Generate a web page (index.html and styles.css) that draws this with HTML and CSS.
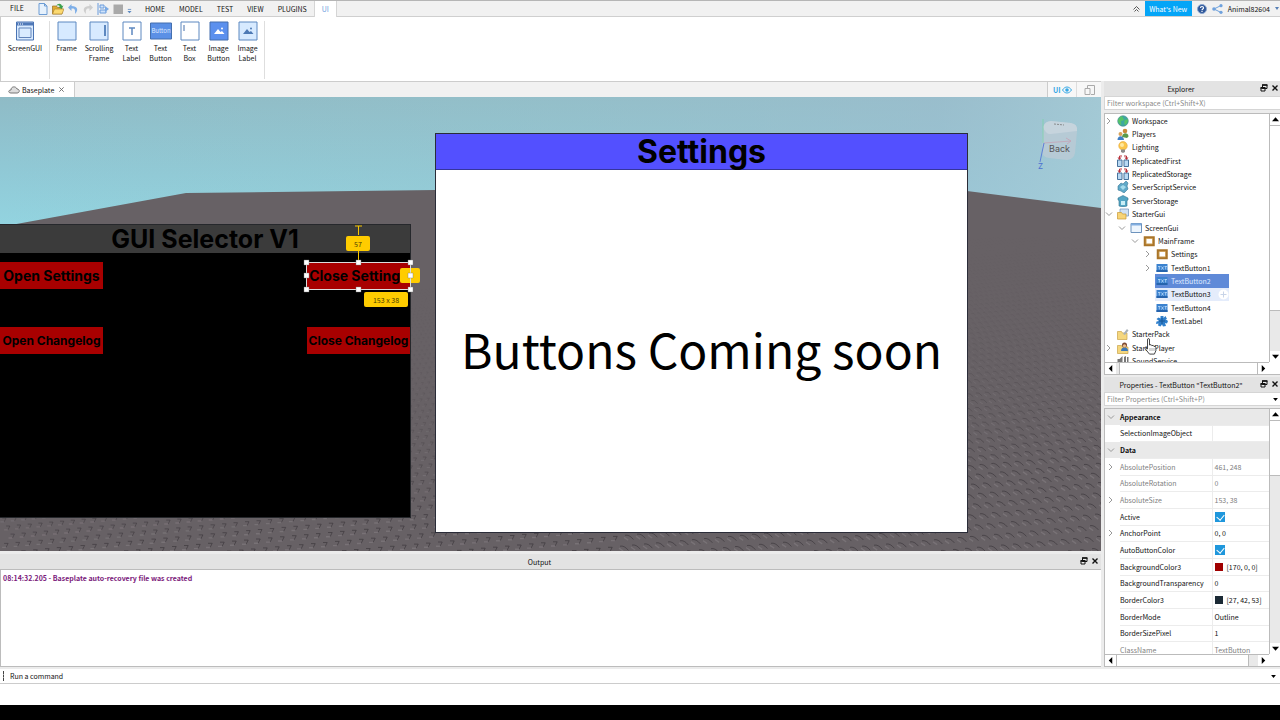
FILE: index.html
```html
<!DOCTYPE html>
<html lang="en">
<head>
<meta charset="utf-8">
<title>Baseplate - Studio</title>
<link rel="stylesheet" href="styles.css">
</head>
<body>
<svg class="defs" aria-hidden="true">
  <symbol id="float" viewBox="0 0 8 8"><path d="M2.500 1h4.500v3.500h-4.500zM1 3.500h4v3.500h-4z" fill="#eee" stroke="#111"/><path d="M2 1h5.500M.500 4h5" stroke="#111" stroke-width="1.500"/></symbol>
  <symbol id="close" viewBox="0 0 8 8"><path d="M1.500 1.500l5 5m0-5l-5 5" stroke="#111" stroke-width="1.400"/></symbol>
  <symbol id="right" viewBox="0 0 8 8"><path d="M2 1l3 3-3 3" fill="none" stroke="#999"/></symbol>
  <symbol id="down" viewBox="0 0 8 8"><path d="M1 2.500l3 3 3-3" fill="none" stroke="#999"/></symbol>
  <symbol id="i-world" viewBox="0 0 12 12"><circle cx="6" cy="6" r="5.300" fill="#3fa7a0" stroke="#4a8a8c" stroke-width=".6"/><path d="M3 2c2-1 3 0 3 1s2 1 1 2-3 0-3 2 1 2 0 3c-2-1-3-3-3-5zM8 5l3-1c0 3-1 5-3 6-1-2-1-3 0-5z" fill="#55c367"/></symbol>
  <symbol id="i-players" viewBox="0 0 12 12"><circle cx="8" cy="3" r="2.300" fill="#c98a3a"/><path d="M5 9c0-5 6.500-5 6.500-.5L10 10z" fill="#5a9a4a"/><circle cx="3.500" cy="6" r="2" fill="#d8a25a"/><path d="M.5 12c0-5 6-5 6.500 0z" fill="#3f7ec4"/></symbol>
  <symbol id="i-light" viewBox="0 0 12 12"><circle cx="6" cy="4.800" r="4.300" fill="#fbc64b" stroke="#e0a030" stroke-width=".5"/><circle cx="5" cy="4" r="2" fill="#ffe9a0"/><path d="M4 8.500h4V11L6 12l-2-1z" fill="#8b8b8b"/></symbol>
  <symbol id="i-repl" viewBox="0 0 12 12"><path d="M.500 5h4.500v6.500H.500zM7 5h4.500v6.500H7z" fill="#b9d9f3" stroke="#47729c"/><path d="M2.500 4V1h2.500M9.500 4V1H7" fill="none" stroke="#b8323c"/><path d="M.500 2.500h4l-2 2.500zM7.500 2.500h4L9.500 5z" fill="#b8323c"/></symbol>
  <symbol id="i-sss" viewBox="0 0 12 12"><path d="M1 5l3-3 2 1 3-3 2 2-1 3 1 3-4 4-3-2-3-1z" fill="#5fa9c8" stroke="#3a7898" stroke-width=".6"/><path d="M3 6l3-2 3 2-3 3z" fill="#a5dbec"/></symbol>
  <symbol id="i-ss" viewBox="0 0 12 12"><path d="M1 3l5-2.500L11 3v2l-1 .5V11l-4 1-4-1V5.500L1 5z" fill="#53a5c4" stroke="#33728e" stroke-width=".6"/><path d="M4 6h4v4H4z" fill="#c8eef6"/></symbol>
  <symbol id="i-sgui" viewBox="0 0 12 12"><path d="M3 1h8.500v7H3z" fill="#cfe1f4" stroke="#6b8fb8" stroke-width=".7"/><path d="M.5 4.500h4l1 1.500H9v5H.5z" fill="#f7d477" stroke="#c79a35" stroke-width=".7"/></symbol>
  <symbol id="i-screen" viewBox="0 0 12 12"><path d="M1 1.500h10.500v9H1z" fill="#edf5fd" stroke="#6d93bd"/><path d="M1 2.500h10" stroke="#82aee0" stroke-width="2"/></symbol>
  <symbol id="i-frame" viewBox="0 0 12 12"><path d="M2 2.500h8.500v7.500H2z" fill="#fff" stroke="#a9742a" stroke-width="2.500"/><path d="M3 3.500h6.500v5.500H3z" fill="none" stroke="#d9ab5d" stroke-width=".6"/></symbol>
  <symbol id="i-btn" viewBox="0 0 12 12"><path d="M.5 2h11v8H.5z" fill="#3b82cf"/><path d="M.5 8h11v2H.5z" fill="#2664ad"/><path d="M2 4.500h2.500M3.300 4.500v3M5.500 4.500l2 3m0-3l-2 3M8.500 4.500H11M9.700 4.500v3" stroke="#bcdcfa" stroke-width=".8"/></symbol>
  <symbol id="i-label" viewBox="0 0 12 12"><path d="M4.500 1h3v2l2-2 1.500 3h-1.500l2.500 2-1 2.500-2-.5 1 3-3 .500-1-2-1.500 2-2.500-1 .500-2-2.500.500L.500 6.500 3 6 .500 4l2-1.500 2 1z" fill="#2f7fcb"/><path d="M3 6h6M6 3v6" stroke="#185796"/></symbol>
  <symbol id="i-pack" viewBox="0 0 12 12"><path d="M.5 3.500h4l1 1.500H10v6.500H.5z" fill="#f5d77e" stroke="#c9a347" stroke-width=".7"/><path d="M6 6l4-5 1.500 1.500L8 7z" fill="#a9b1b8"/></symbol>
  <symbol id="i-splayer" viewBox="0 0 12 12"><path d="M.5 3.500h4l1 1.500H11v6.500H.5z" fill="#f5d77e" stroke="#c9a347" stroke-width=".7"/><path d="M4 9c0-5 7-5 7 0z" fill="#3c78b8"/><circle cx="7.500" cy="3" r="2.500" fill="#7d4b32"/><circle cx="7.500" cy="3.800" r="1.600" fill="#edbd8c"/></symbol>
  <symbol id="i-sound" viewBox="0 0 12 12"><path d="M.5 4h2l3-3v10l-3-3h-2zM7 2l2-1v10l-2-1zM10 2h1.500v8H10z" fill="#777"/></symbol>
  <symbol id="tri-up" viewBox="0 0 8 8"><path d="M0 6h8L4 1.500z"/></symbol>
  <symbol id="tri-down" viewBox="0 0 8 8"><path d="M0 2h8L4 6.500z"/></symbol>
  <symbol id="tri-left" viewBox="0 0 8 8"><path d="M6 0v8L2 4z"/></symbol>
  <symbol id="tri-right" viewBox="0 0 8 8"><path d="M2 0v8l4-4z"/></symbol>
</svg>

<header class="menubar">
  <button class="menu file">FILE</button>
  <div class="quick">
    <button aria-label="New"><svg viewBox="0 0 12 12"><path d="M2 .5h5.500L10 3v8.500H2z" fill="#e6f1fc" stroke="#6c9cd4"/><path d="M7.500.5V3H10" fill="none" stroke="#6c9cd4"/></svg></button>
    <button aria-label="Open"><svg viewBox="0 0 12 12"><path d="M.5 3h4l1 1.500H10V11H.5z" fill="#e1ab31" stroke="#987022" stroke-width=".7"/><path d="M2.500 6H12l-2 5H.5z" fill="#fbd970" stroke="#a87c26" stroke-width=".6"/><path d="M4 3c2-3 5-3 6 0l1.500-.5L9.500 6 6.500 4l1.500-.5C7 2 5.500 2 4 3z" fill="#3ba04c"/></svg></button>
    <button aria-label="Undo"><svg viewBox="0 0 12 12"><path d="M4.500 1L1 4.500 4.500 8V5.500c3-.5 4 1 3.500 5.500 4-4 2.500-8-3.500-8z" fill="#7eafe8"/></svg></button>
    <button aria-label="Redo"><svg viewBox="0 0 12 12"><path d="M7.500 1L11 4.500 7.500 8V5.500c-3-.5-4 1-3.500 5.500C0 7 1.500 3 7.500 3z" fill="#cecece"/></svg></button>
    <button aria-label="Align"><svg viewBox="0 0 12 12"><path d="M1 0v12M3 2h4v3H3zM3 7h6v3H3z" fill="#cfe3fa" stroke="#6a9cdc"/><path d="M8 3l4 3-4 3z" fill="#79a9e4"/></svg></button>
    <button aria-label="Stop"><svg viewBox="0 0 12 12"><path d="M1.500 1.500h9.500v9.500H1.500z" fill="#a9a9a9"/></svg></button>
    <button aria-label="More" class="tiny"><svg viewBox="0 0 6 12"><path d="M1 6.500h4" stroke="#5c89c0"/><path d="M.5 8.500h5L3 11z" fill="#5c89c0"/></svg></button>
  </div>
  <nav class="tabs">
    <button class="menu">HOME</button><button class="menu">MODEL</button><button class="menu">TEST</button><button class="menu">VIEW</button><button class="menu">PLUGINS</button><button class="menu active">UI</button>
  </nav>
  <div class="account">
    <button aria-label="Collapse ribbon"><svg width="7" height="6" viewBox="0 0 7 6"><path d="M.500 3.500l3-3 3 3M1.500 5.500l2-2 2 2" fill="none" stroke="#444" stroke-width=".9"/></svg></button>
    <button class="new">What's New</button>
    <button aria-label="Help"><svg width="10" height="10" viewBox="0 0 10 10"><circle cx="5" cy="5" r="4.500" fill="#2f5799" stroke="#8aa6cf"/><path d="M3.500 4c0-2 3-2 3 0C6.500 5 5 5 5 6.200M5 7v1" fill="none" stroke="#fff" stroke-width="1.200"/></svg></button>
    <button aria-label="Share"><svg width="11" height="10" viewBox="0 0 11 10"><path d="M9 1.500L2 5l7 3.500" fill="none" stroke="#6ea1dd"/><circle cx="9" cy="1.700" r="1.600" fill="#6ea1dd"/><circle cx="2" cy="5" r="1.800" fill="#6ea1dd"/><circle cx="9" cy="8.300" r="1.600" fill="#6ea1dd"/></svg></button>
    <button class="user">Animal82604 <svg width="4" height="3" viewBox="0 0 4 3"><path d="M0 0h4L2 3z" fill="#567fb5"/></svg></button>
  </div>
</header>

<section class="ribbon">
  <div class="group">
    <button class="tool wide"><svg viewBox="0 0 20 20"><path d="M1.500 1h17v18h-17z" fill="#d9ebff" stroke="#4a74b4"/><path d="M2 1.500h16v3H2z" fill="#5079b8"/><path d="M3 3h1m1 0h1m1 0h1" stroke="#fff"/><path d="M4 7h12v9.500H4z" fill="#d9ebff" stroke="#6385bb"/></svg>ScreenGUI</button>
  </div>
  <div class="group">
    <button class="tool"><svg viewBox="0 0 20 20"><path d="M1 1h18v18H1z" fill="#d7eaff" stroke="#5d88c0"/></svg>Frame</button>
    <button class="tool mid"><svg viewBox="0 0 20 20"><path d="M1 1h18v18H1z" fill="#d7eaff" stroke="#5d88c0"/><path d="M16 4v11" stroke="#5d88c0" stroke-width="2"/></svg>Scrolling<br>Frame</button>
    <button class="tool"><svg viewBox="0 0 20 20"><path d="M1 1h18v18H1z" fill="#fff" stroke="#5d88c0"/><path d="M7 7h6M10 7v7" stroke="#5d88c0" stroke-width="1.500"/></svg>Text<br>Label</button>
    <button class="tool"><svg class="wideicon" viewBox="0 0 22 20"><path d="M.5 2h21v16H.5z" fill="#5b90e6" stroke="#446fae"/><text x="11" y="12" text-anchor="middle" class="icontext">Button</text></svg>Text<br>Button</button>
    <button class="tool"><svg viewBox="0 0 20 20"><path d="M1 1h18v18H1z" fill="#fff" stroke="#5d88c0"/><path d="M4 4v6" stroke="#456faa"/></svg>Text<br>Box</button>
    <button class="tool"><svg viewBox="0 0 20 20"><path d="M1 1h18v18H1z" fill="#5b90ee" stroke="#446fae"/><path d="M5 13l4-5 2.500 3L13 10l2.500 3z" fill="#fff"/><circle cx="13" cy="7.500" r="1" fill="#fff"/></svg>Image<br>Button</button>
    <button class="tool"><svg viewBox="0 0 20 20"><path d="M1 1h18v18H1z" fill="#d7eaff" stroke="#5d88c0"/><path d="M5 13l4-5 2.500 3L13 10l2.500 3z" fill="#4e7ab5"/><circle cx="13" cy="7.500" r="1" fill="#4e7ab5"/></svg>Image<br>Label</button>
  </div>
</section>

<div class="work">
  <main class="left">
    <div class="docbar">
      <div class="doctab"><svg width="12" height="8" viewBox="0 0 12 8"><path d="M3 7C0 7 0 4 3 4c0-4 5-4 6-1 3 0 3 4 0 4z" fill="#ddd" stroke="#777"/></svg><span>Baseplate</span><button aria-label="Close tab"><svg width="7" height="7" viewBox="0 0 8 8"><path d="M1.500 1.500l5 5m0-5l-5 5" stroke="#666"/></svg></button></div>
      <div class="docright">
        <button class="uitoggle">UI <svg width="10" height="8" viewBox="0 0 10 8"><path d="M.5 4C3 0 7 0 9.500 4 7 8 3 8 .5 4z" fill="none" stroke="#35a8e6"/><circle cx="5" cy="4" r="1.800" fill="#35a8e6"/></svg></button>
        <button class="device" aria-label="Device"><svg width="12" height="12" viewBox="0 0 12 12"><path d="M3.500 4V1.500h7v9H7M1 4.500h5v6H1z" fill="none" stroke="#aaa"/></svg></button>
      </div>
    </div>
    <section class="viewport" aria-label="3D viewport">
      <svg class="scene" viewBox="0 0 1101 454" preserveAspectRatio="xMidYMax slice">
        <defs>
          <linearGradient id="sky" x1="0" y1="0" x2="0" y2="1"><stop offset="0" stop-color="#8fbbc6"/><stop offset=".5" stop-color="#90c9d6"/><stop offset="1" stop-color="#94d8e4"/></linearGradient>
          <linearGradient id="haze" x1="0" y1="0" x2="1" y2="0"><stop offset="0" stop-color="#9cc" stop-opacity="0"/><stop offset=".85" stop-color="#a0bfd0" stop-opacity=".6"/><stop offset="1" stop-color="#a8ccd8" stop-opacity=".8"/></linearGradient>
        </defs>
        <path d="M0 0h1101v150H0z" fill="url(#sky)"/>
        <path d="M0 0h1101v150H0z" fill="url(#haze)"/>
        <path d="M0 130L186 96 436 93 967 94 1101 111V454H0z" fill="#676165"/>
        <g id="studs" fill="none"></g>
      </svg>
      <svg class="cube" width="52" height="56" viewBox="0 0 52 56"><path d="M12 8Q14 2 20 2l20 2q7 1 6 8l-2 22q-1 6-8 7l-18-2q-7-1-7-7z" fill="#bccbd5" opacity=".8"/><path d="M12 8Q14 2 20 2l20 2q7 1 6 8l-26 3q-5 1-8-7z" fill="#d0dbe2" opacity=".6"/><path d="M13 24l27-2m-5-3l5 3-4 3" fill="none" stroke="#c4a3b6" stroke-width=".8"/><path d="M12 24V0" stroke="#7cd3a9" stroke-width=".8"/><path d="M13 24L9 43" stroke="#5d80d8"/><text x="18" y="33" class="cubetext">Back</text><text x="7" y="50" class="axis">Z</text><path d="M23 5l10 1" stroke="#777" stroke-dasharray="2 1" stroke-width=".8"/></svg>

      <div class="selector">
        <h2>GUI Selector V1</h2>
        <div class="pair"><button>Open Settings</button><button>Close Settings</button></div>
        <div class="pair small"><button>Open Changelog</button><button>Close Changelog</button></div>
      </div>
      <div class="settings">
        <h2>Settings</h2>
        <p>Buttons Coming soon</p>
      </div>
      <span class="tag dist">57</span>
      <span class="tag side"></span>
      <span class="tag size">153 x 38</span>
      <svg class="handles" width="112" height="72" viewBox="0 0 112 72"><path d="M52 2h7M55.500 2v9M55.500 27v10" stroke="#f7c600"/><path d="M3.500 38.500h104v27h-104z" fill="none" stroke="#ddd"/><path d="M1 36h5v5H1zM53 36h5v5h-5zM105 36h5v5h-5zM1 49h5v5H1zM105 49h5v5h-5zM1 63h5v5H1zM53 63h5v5h-5zM105 63h5v5h-5z" fill="#fff" stroke="#777" stroke-width=".4"/></svg>
    </section>
    <section class="output">
      <div class="title"><span>Output</span><span class="wins"><button aria-label="Float"><svg><use href="#float"/></svg></button><button aria-label="Close"><svg><use href="#close"/></svg></button></span></div>
      <div class="log">08:14:32.205 - Baseplate auto-recovery file was created</div>
    </section>
  </main>

  <aside class="dock">
    <section class="panel">
      <div class="title"><span>Explorer</span><span class="wins"><button aria-label="Float"><svg><use href="#float"/></svg></button><button aria-label="Close"><svg><use href="#close"/></svg></button></span></div>
      <input class="filter" type="text" aria-label="Filter workspace" placeholder="Filter workspace (Ctrl+Shift+X)">
      <div class="scrollbox first">
        <ul class="tree">
          <li><svg class="arrow"><use href="#right"/></svg><svg class="ic"><use href="#i-world"/></svg><span>Workspace</span></li>
          <li><i class="arrow"></i><svg class="ic"><use href="#i-players"/></svg><span>Players</span></li>
          <li><i class="arrow"></i><svg class="ic"><use href="#i-light"/></svg><span>Lighting</span></li>
          <li><i class="arrow"></i><svg class="ic"><use href="#i-repl"/></svg><span>ReplicatedFirst</span></li>
          <li><i class="arrow"></i><svg class="ic"><use href="#i-repl"/></svg><span>ReplicatedStorage</span></li>
          <li><i class="arrow"></i><svg class="ic"><use href="#i-sss"/></svg><span>ServerScriptService</span></li>
          <li><i class="arrow"></i><svg class="ic"><use href="#i-ss"/></svg><span>ServerStorage</span></li>
          <li><svg class="arrow"><use href="#down"/></svg><svg class="ic"><use href="#i-sgui"/></svg><span>StarterGui</span></li>
          <li class="l1"><svg class="arrow"><use href="#down"/></svg><svg class="ic"><use href="#i-screen"/></svg><span>ScreenGui</span></li>
          <li class="l2"><svg class="arrow"><use href="#down"/></svg><svg class="ic"><use href="#i-frame"/></svg><span>MainFrame</span></li>
          <li class="l3"><svg class="arrow"><use href="#right"/></svg><svg class="ic"><use href="#i-frame"/></svg><span>Settings</span></li>
          <li class="l3"><svg class="arrow"><use href="#right"/></svg><svg class="ic"><use href="#i-btn"/></svg><span>TextButton1</span></li>
          <li class="l3 sel"><i class="arrow"></i><svg class="ic"><use href="#i-btn"/></svg><span>TextButton2</span></li>
          <li class="l3 hov"><i class="arrow"></i><svg class="ic"><use href="#i-btn"/></svg><span>TextButton3</span><svg class="plus" viewBox="0 0 11 11"><circle cx="5.500" cy="5.500" r="5" fill="#fff"/><path d="M5.500 2.500v6m-3-3h6" stroke="#c8d4e8"/></svg></li>
          <li class="l3"><i class="arrow"></i><svg class="ic"><use href="#i-btn"/></svg><span>TextButton4</span></li>
          <li class="l3"><i class="arrow"></i><svg class="ic"><use href="#i-label"/></svg><span>TextLabel</span></li>
          <li><i class="arrow"></i><svg class="ic"><use href="#i-pack"/></svg><span>StarterPack</span></li>
          <li><svg class="arrow"><use href="#right"/></svg><svg class="ic"><use href="#i-splayer"/></svg><span>StarterPlayer</span></li>
          <li><i class="arrow"></i><svg class="ic"><use href="#i-sound"/></svg><span>SoundService</span></li>
        </ul>
        <div class="vbar"><svg><use href="#tri-up"/></svg><div class="vthumb tall"></div><svg><use href="#tri-down"/></svg></div>
        <div class="hbar"><svg><use href="#tri-left"/></svg><div class="hthumb end"></div><svg><use href="#tri-right"/></svg></div>
        <svg class="cursor" width="13" height="17" viewBox="0 0 13 17"><path d="M3.500 10V2q0-1.500 1-1.500t1 1.500v5q2-1 2.200.6 2-.8 2.200.8 2-.4 2 1.200v3l-1.500 3.500H5.500L1 10.500q0-1.700 2.500.5z" fill="#fff" stroke="#333" stroke-width=".9"/><path d="M6 10v3m2-3v3m2-3v3" stroke="#555" stroke-width=".5"/></svg>
      </div>
    </section>
    <section class="panel">
      <div class="title"><span>Properties - TextButton "TextButton2"</span><span class="wins"><button aria-label="Float"><svg><use href="#float"/></svg></button><button aria-label="Close"><svg><use href="#close"/></svg></button></span></div>
      <div class="combo"><input class="filter" type="text" aria-label="Filter Properties" placeholder="Filter Properties (Ctrl+Shift+P)"><svg width="5" height="3" viewBox="0 0 8 5"><path d="M0 0h8L4 5z"/></svg></div>
      <div class="scrollbox">
        <div class="propclip"><table class="props">
          <colgroup><col class="c-arrow"><col><col class="c-value"></colgroup>
          <tr class="head"><td><svg><use href="#down"/></svg></td><th colspan="2">Appearance</th></tr>
          <tr><td></td><td>SelectionImageObject</td><td></td></tr>
          <tr class="head"><td><svg><use href="#down"/></svg></td><th colspan="2">Data</th></tr>
          <tr class="dim"><td><svg><use href="#right"/></svg></td><td>AbsolutePosition</td><td>461, 248</td></tr>
          <tr class="dim"><td></td><td>AbsoluteRotation</td><td>0</td></tr>
          <tr class="dim"><td><svg><use href="#right"/></svg></td><td>AbsoluteSize</td><td>153, 38</td></tr>
          <tr><td></td><td><label for="active">Active</label></td><td><input type="checkbox" id="active" checked></td></tr>
          <tr><td><svg><use href="#right"/></svg></td><td>AnchorPoint</td><td>0, 0</td></tr>
          <tr><td></td><td><label for="auto">AutoButtonColor</label></td><td><input type="checkbox" id="auto" checked></td></tr>
          <tr><td></td><td>BackgroundColor3</td><td><i class="swatch red"></i>[170, 0, 0]</td></tr>
          <tr><td></td><td>BackgroundTransparency</td><td>0</td></tr>
          <tr><td></td><td>BorderColor3</td><td><i class="swatch navy"></i>[27, 42, 53]</td></tr>
          <tr><td></td><td>BorderMode</td><td>Outline</td></tr>
          <tr><td></td><td>BorderSizePixel</td><td>1</td></tr>
          <tr class="dim"><td></td><td>ClassName</td><td>TextButton</td></tr>
        </table></div>
        <div class="vbar"><svg><use href="#tri-up"/></svg><div class="vthumb short"></div><svg><use href="#tri-down"/></svg></div>
        <div class="hbar"><svg><use href="#tri-left"/></svg><div class="hthumb"></div><svg><use href="#tri-right"/></svg></div>
      </div>
    </section>
  </aside>
</div>

<div class="command"><div class="cmdline"><i class="grip"></i><input type="text" aria-label="Command" placeholder="Run a command"><svg width="5" height="3" viewBox="0 0 8 5"><path d="M0 0h8L4 5z"/></svg></div></div>
<footer class="taskbar"></footer>
<script src="studs.js"></script>
</body>
</html>
```
FILE: styles.css
```css
* { box-sizing: border-box; }
body {
  margin: 0;
  height: 100vh;
  display: flex;
  flex-direction: column;
  overflow: hidden;
  background: #fff;
  color: #111;
  font: 7px/12px "Noto Sans CJK SC", "Noto Sans", sans-serif;
}
button, input {
  font: inherit;
  color: inherit;
  border: 0;
  padding: 0;
  margin: 0;
  background: none;
}
svg { display: block; flex: none; }
.defs { position: absolute; width: 0; height: 0; }
h2, p, ul { margin: 0; padding: 0; list-style: none; }

/* menu */
.menubar {
  display: flex;
  align-items: stretch;
  height: 17px;
  flex: none;
  background: #f1f1f1;
  border-top: 1px solid #b5b5b5;
  border-bottom: 1px solid #cfcfcf;
}
.menu { padding: 0 7px; }
.file { width: 34px; padding: 0 0 2px; }
.quick { display: flex; align-items: center; gap: 3px; margin-left: 3px; width: 101px; }
.quick svg { width: 12px; height: 12px; }
.quick .tiny svg { width: 5px; height: 10px; }
.tabs { display: flex; }
.tabs .active {
  background: #fff;
  color: #6d9fe0;
  margin-bottom: -1px;
  border: 1px solid #d5d5d5;
  border-width: 0 1px;
}
.account { display: flex; align-items: center; margin-left: auto; gap: 5px; }
.new { background: #04a5f7; color: #fff; align-self: stretch; width: 47px; }
.user { display: flex; align-items: center; gap: 5px; padding-right: 1px; }

/* ribbon */
.ribbon { display: flex; flex: none; height: 64px; padding: 4px 0 2px; border-left: 1px solid #ccc; }
.group { display: flex; align-items: flex-start; border-right: 1px solid #dedede; align-self: stretch; }
.group + .group { padding: 0 2px; }
.tool {
  display: flex;
  flex-direction: column;
  align-items: center;
  width: 29px;
  line-height: 10px;
}
.tool svg { width: 20px; height: 20px; margin-bottom: 2px; }
.tool .wideicon { width: 22px; }
.tool.wide { width: 48px; }
.tool.mid { width: 36px; }
.icontext { font-size: 6px; fill: #dbe9ff; }

/* layout */
.work {
  flex: 1;
  min-height: 0;
  display: grid;
  grid-template: minmax(0, 1fr) / minmax(0, 1fr) 176px;
  gap: 3px;
  background: #ececec;
}
.left { display: flex; flex-direction: column; min-height: 0; }
.docbar { display: flex; flex: none; height: 16px; background: #f1f1f1; border-top: 1px solid #ccc; }
.doctab { display: flex; align-items: center; gap: 2px; padding: 0 9px 0 8px; background: #fff; border-right: 1px solid #ccc; }
.doctab button { margin-left: 2px; }
.docright { display: flex; margin-left: auto; background: #f7f7f7; border-left: 1px solid #ccc; }
.uitoggle { display: flex; align-items: center; gap: 1px; width: 28px; padding-left: 5px; color: #35a8e6; font-weight: 700; }
.device { width: 25px; padding-left: 7px; border-left: 1px solid #ddd; }

/* viewport */
.viewport { position: relative; flex: 1; min-height: 0; overflow: hidden; background: #676165; }
.scene { position: absolute; inset: 0; width: 100%; height: 100%; }
.cube { position: absolute; right: 18px; top: 22px; }
.cubetext { font: 9px "Inter", sans-serif; fill: #555; }
.axis { font: 8px "Inter", sans-serif; fill: #4a6fd0; }
.selector {
  position: absolute;
  left: 0;
  top: 127px;
  width: 411px;
  height: 294px;
  background: #000;
  border: 1px solid #26282c;
  border-left: 0;
  font-family: "Inter", sans-serif;
  font-weight: 700;
  color: #000;
}
.selector h2 { background: #3b3b3b; font-size: 25px; line-height: 28px; text-align: center; margin-bottom: 9px; }
.pair { display: flex; justify-content: space-between; margin-bottom: 38px; font-size: 14px; }
.pair button { width: 103px; height: 27px; background: #a80000; white-space: nowrap; }
.pair.small { font-size: 12px; }
.settings {
  position: absolute;
  left: 435px;
  top: 36px;
  width: 533px;
  height: 400px;
  display: flex;
  flex-direction: column;
  background: #fff;
  border: 1px solid #2a2c38;
  color: #000;
}
.settings h2 {
  background: #5350ff;
  border-bottom: 1px solid #35359c;
  font: 700 32px/35px "Inter", sans-serif;
  text-align: center;
}
.settings p {
  flex: 1;
  display: flex;
  align-items: center;
  justify-content: center;
  padding-bottom: 6px;
  font-size: 48px;
  line-height: 60px;
  white-space: nowrap;
}
.tag { position: absolute; display: flex; align-items: center; justify-content: center; background: #fc0; border-radius: 2px; height: 15px; color: #4a3c00; }
.dist { left: 346px; top: 139px; width: 24px; }
.side { left: 400px; top: 171px; width: 20px; }
.size { left: 364px; top: 195px; width: 44px; }
.handles { position: absolute; left: 303px; top: 127px; }

/* panels */
.title { position: relative; display: flex; flex: none; align-items: center; justify-content: center; height: 15px; padding-right: 22px; background: #e3e3e3; }
.wins { position: absolute; right: 1px; top: 3px; display: flex; gap: 3px; }
.wins svg { width: 8px; height: 8px; }
.output { display: flex; flex: none; flex-direction: column; border-top: 3px solid #ececec; }
.log { height: 98px; padding: 2px; background: #fff; border: 1px solid #bcbcbc; border-width: 1px 0 1px 1px; color: #7b1a7b; font-weight: 700; }
.output .wins { right: 2px; }
.dock { display: grid; grid-template-rows: minmax(0, 294fr) minmax(0, 290fr); gap: 2px; }
.panel { display: flex; flex-direction: column; min-height: 0; }
.filter { width: 100%; flex: none; height: 14px; padding: 0 2px; background: #fff; border: 1px solid #d5d5d5; border-right: 0; }
.filter::placeholder { color: #8a8a8a; opacity: 1; }
.combo { position: relative; display: flex; flex: none; }
.combo svg { position: absolute; right: 2px; top: 6px; }
.scrollbox {
  position: relative;
  flex: 1;
  min-height: 0;
  display: grid;
  grid-template: minmax(0, 1fr) 12px / minmax(0, 1fr) 11px;
  margin-top: 2px;
  background: #fff;
  border: 1px solid #bbb;
  border-right: 0;
}
.scrollbox.first { margin-top: 3px; }
.tree { grid-area: 1 / 1; display: grid; grid-template-rows: repeat(19, calc(254px / 19)); overflow: hidden; }
.tree li { display: flex; align-items: center; min-height: 0; }
.tree .arrow { width: 8px; height: 8px; margin-right: 4px; flex: none; }
.tree .ic { width: 12px; height: 12px; margin-right: 3px; }
.l1 { padding-left: 13px; }
.l2 { padding-left: 26px; }
.l3 { padding-left: 39px; }
.sel, .hov { margin-right: 40px; }
.sel { color: #dfeaff; background: linear-gradient(#5f8ad8, #5f8ad8) 50px 0 no-repeat; }
.hov { background: linear-gradient(#e4ecfb, #e4ecfb) 50px 0 no-repeat; }
.plus { width: 11px; height: 11px; margin-left: auto; }
.vbar { grid-area: 1 / 2; display: flex; flex-direction: column; background: #e9e9e9; border-left: 1px solid #bbb; }
.vbar > svg, .hbar > svg { width: 11px; height: 11px; padding: 2px; background: #fff; }
.vthumb { background: #fff; border: 1px solid #bbb; border-width: 1px 0; margin-bottom: auto; }
.tall { height: 75%; }
.short { height: 56px; }
.hbar { grid-area: 2 / 1; display: flex; background: #e9e9e9; border-top: 1px solid #bbb; }
.hthumb { flex: 1; background: #fff; border: 1px solid #bbb; border-width: 0 1px; margin-right: 9px; }
.hthumb.end { margin: 0 0 0 3px; }
.cursor { position: absolute; left: 39px; top: 224px; }

/* properties */
.propclip { grid-area: 1 / 1; overflow: hidden; }
.props { width: 100%; height: 250px; border-collapse: collapse; table-layout: fixed; line-height: 12px; }
.c-arrow { width: 15px; }
.c-value { width: 57px; }
.props td, .props th { padding: 0; text-align: left; border-bottom: 1px solid #ececec; white-space: nowrap; }
.props td:first-child { padding-left: 2px; border: 0; }
.props td:nth-child(2) { border-right: 1px solid #ececec; }
.props td:nth-child(3) { padding-left: 2px; }
.props svg { width: 8px; height: 8px; }
.head { background: #e9e9e9; }
.dim { color: #808080; }
.props input {
  display: block;
  appearance: none;
  width: 10px;
  height: 10px;
  background: #1f97dc;
  position: relative;
}
.props input::after {
  content: "";
  position: absolute;
  left: 3px;
  top: 1px;
  width: 4px;
  height: 6px;
  border: solid #fff;
  border-width: 0 1px 1px 0;
  transform: rotate(40deg);
}
.swatch { display: inline-block; width: 8px; height: 8px; margin-right: 4px; vertical-align: -1px; }
.red { background: #a00000; }
.navy { background: #1b2a35; }

/* bottom */
.command { flex: none; height: 38px; background: #fff; }
.cmdline { display: flex; align-items: center; height: 17px; padding-right: 4px; border-top: 2px solid #ececec; border-bottom: 1px solid #ccc; }
.cmdline input { flex: 1; padding: 0 2px; height: 14px; }
.cmdline input::placeholder { color: #111; opacity: 1; }
.grip { width: 1px; height: 10px; margin: 0 4px 0 3px; border-left: 1px dashed #444; }
.taskbar { flex: none; height: 15px; background: #000; }
```
FILE: studs.js
```js
// Fills the baseplate with rows of studs that shrink and fade with distance.
(function () {
  var group = document.getElementById("studs");
  var ns = "http://www.w3.org/2000/svg";
  function add(d, color, opacity, width) {
    var p = document.createElementNS(ns, "path");
    p.setAttribute("d", d);
    p.setAttribute("stroke", color);
    p.setAttribute("stroke-opacity", opacity);
    p.setAttribute("stroke-width", width);
    group.appendChild(p);
  }
  var row = 0;
  for (var y = 550; y > 200; y -= Math.max(3, (y - 150) / 34)) {
    var near = Math.min(1, (y - 160) / 300);
    var step = Math.max(4, 12 * near);
    var dark = "", light = "";
    for (var x = (row * 5) % step; x < 1101; x += step) {
      var sy = y - x * 0.09;
      if (sy < 140) continue;
      var w = step * 0.35, h = step * 0.35;
      if (x < 620) {
        dark += "M" + x.toFixed(1) + " " + sy.toFixed(1) + "h" + w.toFixed(1) + "l" + (-w * 0.5).toFixed(1) + " " + h.toFixed(1);
        light += "M" + (x - 2).toFixed(1) + " " + (sy + h).toFixed(1) + "h" + w.toFixed(1);
      } else {
        dark += "M" + x.toFixed(1) + " " + sy.toFixed(1) + "q" + w.toFixed(1) + " -1 " + (w * 2).toFixed(1) + " " + h.toFixed(1);
        light += "M" + (x - 1).toFixed(1) + " " + (sy + 2).toFixed(1) + "l" + w.toFixed(1) + " " + (h * 0.7).toFixed(1);
      }
    }
    add(dark, "#3a353a", 0.65 * near * near, near);
    add(light, "#8a8488", 0.5 * near * near, near * 1.4);
    row++;
  }
})();
```
